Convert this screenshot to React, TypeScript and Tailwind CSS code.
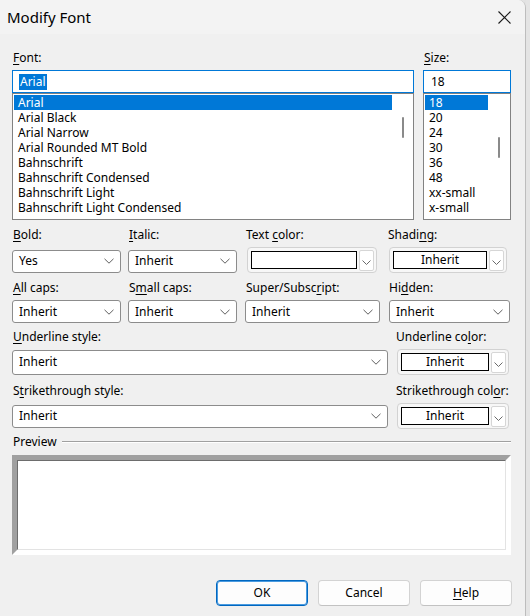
import React from "react";

type Key = { a?: string; k: string; b?: string };

function Lbl({ a, k, b }: Key) {
  return (
    <div className="h-[16px] pl-[1px] text-[12px] leading-[16px] text-black">
      {a}
      <span className="underline decoration-[1px] underline-offset-[2px]">{k}</span>
      {b}
    </div>
  );
}

function Chevron() {
  return (
    <svg width="10" height="6" viewBox="0 0 10 6" className="shrink-0">
      <path d="M0.5 0.8 L5 5.2 L9.5 0.8" fill="none" stroke="#5f5f5f" strokeWidth="1" />
    </svg>
  );
}

function Select({ value, w, h = "h-[23px]" }: { value: string; w: string; h?: string }) {
  return (
    <div
      className={`flex ${w} ${h} items-center justify-between rounded-[3px] border border-[#8c8c8c] bg-white pl-[6px] pr-[6px] text-[12px] text-black`}
    >
      <span>{value}</span>
      <Chevron />
    </div>
  );
}

function ColorPick({ value, w }: { value?: string; w: string }) {
  return (
    <div
      className={`flex ${w} h-[26px] items-center gap-[2px] rounded-[4px] border border-[#d2d2d2] bg-[#f7f7f7] pl-[3px] pr-[2px]`}
    >
      <div className="flex h-[18px] flex-1 items-center justify-center border border-black bg-white text-[12px] text-black">
        {value}
      </div>
      <div className="flex h-[21px] w-[15px] items-end justify-center rounded-[2px] border border-[#d6d6d6] bg-white pb-[5px]">
        <svg width="9" height="5" viewBox="0 0 9 5">
          <path d="M0.5 0.5 L4.5 4.5 L8.5 0.5" fill="none" stroke="#6a6a6a" strokeWidth="1" />
        </svg>
      </div>
    </div>
  );
}

const fonts = [
  "Arial",
  "Arial Black",
  "Arial Narrow",
  "Arial Rounded MT Bold",
  "Bahnschrift",
  "Bahnschrift Condensed",
  "Bahnschrift Light",
  "Bahnschrift Light Condensed",
];

const sizes = ["18", "20", "24", "30", "36", "48", "xx-small", "x-small"];

function ListBox({
  items,
  w,
  rowW,
  thumb,
}: {
  items: string[];
  w: string;
  rowW: string;
  thumb: string;
}) {
  return (
    <div className={`flex ${w} h-[127px] border border-[#828282] bg-white pl-[1px] pt-[1px]`}>
      <div className={`flex ${rowW} shrink-0 flex-col`}>
        {items.map((it, i) => (
          <div
            key={it}
            className={`flex h-[15px] items-center overflow-hidden pl-[4px] text-[12px] leading-[14px] ${
              i === 0 ? "bg-[#0078d7] text-white" : "text-black"
            }`}
          >
            {it}
          </div>
        ))}
      </div>
      <div className="flex flex-1 justify-center">
        <div className={`w-[2px] rounded-full bg-[#8a8a8a] ${thumb}`} />
      </div>
    </div>
  );
}

function Button({ label, primary }: { label: React.ReactNode; primary?: boolean }) {
  return (
    <div
      className={`flex h-[26px] w-[92px] items-center justify-center rounded-[4px] border bg-[#fdfdfd] text-[12px] text-black ${
        primary ? "border-[#0067c0] shadow-[inset_0_0_0_1px_#4a9be0]" : "border-[#d3d3d3] border-b-[#c2c2c2]"
      }`}
    >
      {label}
    </div>
  );
}

export default function App() {
  return (
    <div className="flex h-[616px] w-[530px] overflow-hidden bg-[#e2e2e2] font-['Segoe_UI','Noto_Sans',sans-serif]">
      <div className="flex w-[526px] shrink-0 flex-col overflow-hidden rounded-tr-[8px] border-r border-[#bdbdbd] bg-[#f0f0f0]">
        {/* title bar */}
        <div className="flex h-[34px] shrink-0 items-center justify-between bg-[#f3f3f3] pl-[7px] pr-[14px]">
          <span className="text-[15px] text-black">Modify Font</span>
          <svg width="13" height="13" viewBox="0 0 13 13">
            <path d="M0.5 0.5 L12.5 12.5 M12.5 0.5 L0.5 12.5" stroke="#1a1a1a" strokeWidth="1.1" />
          </svg>
        </div>

        <div className="flex flex-col px-[12px]">
          {/* font / size */}
          <div className="mt-[16px] flex gap-[9px]">
            <div className="flex w-[402px] flex-col">
              <Lbl k="F" b="ont:" />
              <div className="mt-[4px] flex h-[23px] items-center border border-[#0078d7] bg-white pl-[6px]">
                <span className="bg-[#0078d7] px-[1px] text-[12px] leading-[16px] text-white">Arial</span>
              </div>
              <ListBox items={fonts} w="w-[402px]" rowW="w-[378px]" thumb="mt-[22px] h-[21px]" />
            </div>
            <div className="flex w-[88px] flex-col">
              <Lbl k="S" b="ize:" />
              <div className="mt-[4px] flex h-[23px] items-center border border-[#0078d7] bg-white pl-[7px] text-[12px] text-black">
                18
              </div>
              <ListBox items={sizes} w="w-[88px]" rowW="w-[63px]" thumb="mt-[42px] h-[21px]" />
            </div>
          </div>

          {/* row 1 */}
          <div className="mt-[7px] flex">
            <div className="flex w-[116px] flex-col">
              <Lbl k="B" b="old:" />
              <div className="mt-[5px] flex h-[26px] items-center">
                <Select value="Yes" w="w-[109px]" />
              </div>
            </div>
            <div className="flex w-[117px] flex-col">
              <Lbl k="I" b="talic:" />
              <div className="mt-[5px] flex h-[26px] items-center">
                <Select value="Inherit" w="w-[109px]" />
              </div>
            </div>
            <div className="flex w-[142px] flex-col">
              <Lbl a="Text " k="c" b="olor:" />
              <div className="mt-[4px] flex h-[26px] items-center pl-[2px]">
                <ColorPick w="w-[130px]" />
              </div>
            </div>
            <div className="flex flex-1 flex-col">
              <Lbl a="Shadi" k="n" b="g:" />
              <div className="mt-[4px] flex h-[26px] items-center pl-[2px]">
                <ColorPick value="Inherit" w="w-[118px]" />
              </div>
            </div>
          </div>

          {/* row 2 */}
          <div className="mt-[6px] flex">
            <div className="flex w-[116px] flex-col">
              <Lbl k="A" b="ll caps:" />
              <div className="mt-[4px]">
                <Select value="Inherit" w="w-[109px]" />
              </div>
            </div>
            <div className="flex w-[117px] flex-col">
              <Lbl a="S" k="m" b="all caps:" />
              <div className="mt-[4px]">
                <Select value="Inherit" w="w-[109px]" />
              </div>
            </div>
            <div className="flex w-[143px] flex-col">
              <Lbl a="Super/Subsc" k="r" b="ipt:" />
              <div className="mt-[4px]">
                <Select value="Inherit" w="w-[135px]" />
              </div>
            </div>
            <div className="flex flex-1 flex-col">
              <Lbl a="Hi" k="d" b="den:" />
              <div className="mt-[4px] pl-[1px]">
                <Select value="Inherit" w="w-[121px]" />
              </div>
            </div>
          </div>

          {/* row 3 */}
          <div className="mt-[6px] flex gap-[7px]">
            <div className="flex w-[376px] flex-col">
              <Lbl k="U" b="nderline style:" />
              <div className="mt-[4px] flex h-[26px] items-center">
                <Select value="Inherit" w="w-[376px]" h="h-[25px]" />
              </div>
            </div>
            <div className="flex flex-1 flex-col">
              <Lbl a="Underline co" k="l" b="or:" />
              <div className="mt-[4px] pl-[2px]">
                <ColorPick value="Inherit" w="w-[112px]" />
              </div>
            </div>
          </div>

          {/* row 4 */}
          <div className="mt-[8px] flex gap-[7px]">
            <div className="flex w-[376px] flex-col">
              <Lbl a="S" k="t" b="rikethrough style:" />
              <div className="mt-[4px] flex h-[26px] items-center">
                <Select value="Inherit" w="w-[376px]" h="h-[23px]" />
              </div>
            </div>
            <div className="flex flex-1 flex-col">
              <Lbl a="Strikethrough col" k="o" b="r:" />
              <div className="mt-[4px] pl-[2px]">
                <ColorPick value="Inherit" w="w-[112px]" />
              </div>
            </div>
          </div>

          {/* preview */}
          <div className="mt-[5px] flex w-[499px] items-center gap-[5px]">
            <div className="h-[16px] pl-[1px] text-[12px] leading-[16px] text-black">Preview</div>
            <div className="h-[2px] flex-1 border-t border-[#a0a0a0] border-b border-b-white" />
          </div>
          <div className="mt-[5px] h-[100px] w-[499px] border-[5px] border-t-[#a0a0a0] border-l-[#a0a0a0] border-r-white border-b-white">
            <div className="h-full w-full border border-t-[#6d6d6d] border-l-[#6d6d6d] border-r-[#e3e3e3] border-b-[#e3e3e3] bg-white" />
          </div>

          {/* buttons */}
          <div className="mt-[25px] flex gap-[10px] pl-[204px]">
            <Button label="OK" primary />
            <Button label="Cancel" />
            <Button
              label={
                <span>
                  <span className="underline underline-offset-[2px]">H</span>elp
                </span>
              }
            />
          </div>
        </div>
      </div>
      <div className="flex-1 bg-[#e4e4e4]" />
    </div>
  );
}
